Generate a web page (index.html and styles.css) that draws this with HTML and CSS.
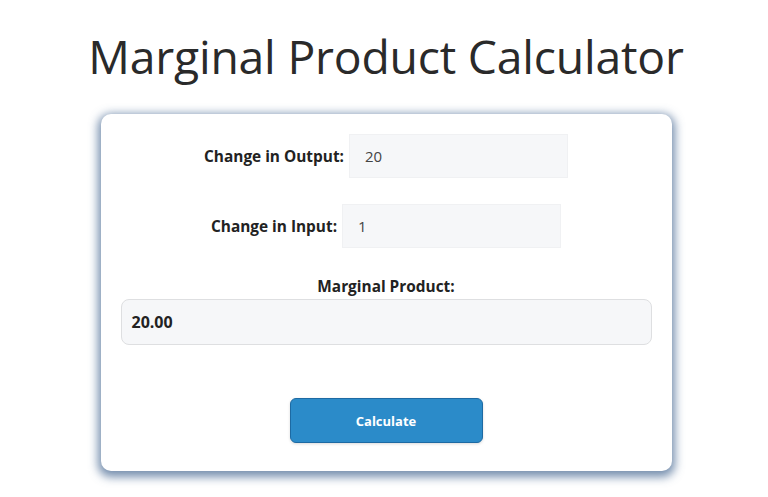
FILE: index.html
```html
<!DOCTYPE html>
<html>
<head>
<meta charset="utf-8">
<link rel="stylesheet" href="styles.css">
</head>
<body>
<h1 class="title">Marginal Product Calculator</h1>
<div class="card">
  <div class="row">
    <label class="label">Change in Output:</label>
    <input class="field" type="text" value="20">
  </div>
  <div class="row row-second">
    <label class="label">Change in Input:</label>
    <input class="field" type="text" value="1">
  </div>
  <div class="result-label">Marginal Product:</div>
  <div class="result">20.00</div>
  <div class="actions">
    <button class="btn">Calculate</button>
  </div>
</div>
</body>
</html>
```
FILE: styles.css
```css
html, body {
  margin: 0;
  padding: 0;
  background: #ffffff;
}
body {
  font-family: "Open Sans", "Noto Sans", sans-serif;
  color: #222;
  padding-left: 4px;
  padding-bottom: 26px;
}
.title {
  margin: 0;
  padding-top: 26px;
  height: 88px;
  box-sizing: border-box;
  text-align: center;
  font-size: 46.3px;
  font-weight: 400;
  line-height: 62px;
  color: #2a2a2a;
  letter-spacing: -0.2px;
}
.card {
  width: 571px;
  margin: 26px auto 0;
  box-sizing: border-box;
  padding: 20px 20px 28px;
  background: #fff;
  border-radius: 10px;
  box-shadow: 0 3px 10px 3px rgba(60, 95, 140, 0.7);
}
.row {
  display: flex;
  justify-content: center;
  align-items: center;
  gap: 5px;
}
.row-second {
  margin-top: 26px;
}
.label {
  font-size: 15.4px;
  font-weight: 700;
  color: #222;
}
.field {
  width: 219px;
  height: 44px;
  box-sizing: border-box;
  border: 1px solid #f0f1f3;
  background: #f6f7f9;
  padding: 0 15px;
  font-family: "Open Sans", "Noto Sans", sans-serif;
  font-size: 15px;
  color: #444;
  outline: none;
}
.result-label {
  margin-top: 28px;
  text-align: center;
  font-size: 15.4px;
  font-weight: 700;
  line-height: 22px;
}
.result {
  margin-top: 1px;
  height: 46px;
  box-sizing: border-box;
  border: 1px solid #dedfe1;
  border-radius: 8px;
  background: #f6f7f9;
  padding: 0 10px;
  display: flex;
  align-items: center;
  font-size: 16px;
  font-weight: 700;
  color: #222;
}
.actions {
  margin-top: 53px;
  display: flex;
  justify-content: center;
}
.btn {
  width: 193px;
  height: 45px;
  border: 1px solid #1d6aa3;
  border-radius: 6px;
  background: #2b8bc9;
  color: #fff;
  font-family: "Open Sans", "Noto Sans", sans-serif;
  font-size: 13px;
  font-weight: 700;
  box-shadow: 0 1px 3px rgba(0,0,0,0.15);
}
```
